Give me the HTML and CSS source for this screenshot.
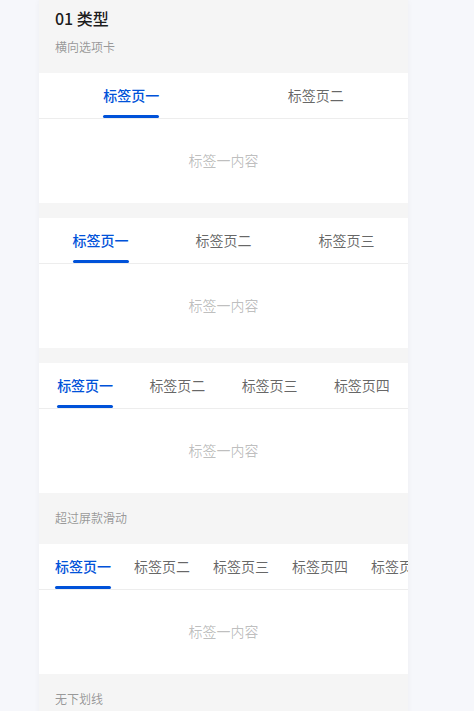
FILE: index.html
```html
<!DOCTYPE html>
<html lang="zh-CN">
<head>
    <meta charset="UTF-8">
    <meta name="viewport" content="width=device-width, initial-scale=1.0">
    <title>Tabs 选项卡</title>
    <link rel="stylesheet" href="styles.css">
</head>
<body>

    <div class="demo">
        <h2 class="demo-title">01 类型</h2>
        <p class="demo-desc first">横向选项卡</p>

        <!-- 两个标签 -->
        <div class="tabs">
            <div class="tabs-nav">
                <div class="tab active"><span>标签页一</span></div>
                <div class="tab"><span>标签页二</span></div>
            </div>
            <div class="tabs-panel">标签一内容</div>
        </div>

        <!-- 三个标签 -->
        <div class="tabs">
            <div class="tabs-nav">
                <div class="tab active"><span>标签页一</span></div>
                <div class="tab"><span>标签页二</span></div>
                <div class="tab"><span>标签页三</span></div>
            </div>
            <div class="tabs-panel">标签一内容</div>
        </div>

        <!-- 四个标签 -->
        <div class="tabs">
            <div class="tabs-nav">
                <div class="tab active"><span>标签页一</span></div>
                <div class="tab"><span>标签页二</span></div>
                <div class="tab"><span>标签页三</span></div>
                <div class="tab"><span>标签页四</span></div>
            </div>
            <div class="tabs-panel">标签一内容</div>
        </div>

        <p class="demo-desc">超过屏款滑动</p>

        <div class="tabs">
            <div class="tabs-nav scroll">
                <div class="tab active"><span>标签页一</span></div>
                <div class="tab"><span>标签页二</span></div>
                <div class="tab"><span>标签页三</span></div>
                <div class="tab"><span>标签页四</span></div>
                <div class="tab"><span>标签页五</span></div>
                <div class="tab"><span>标签页六</span></div>
            </div>
            <div class="tabs-panel">标签一内容</div>
        </div>

        <p class="demo-desc">无下划线</p>
    </div>

</body>
</html>
```

FILE: styles.css
```css
body {
    margin: 0;
    background: #f6f7fb;
    font-family: "Noto Sans CJK SC", "Noto Sans", sans-serif;
}

.demo {
    width: 369px;
    min-height: 100vh;
    margin-left: 39px;
    background: #f5f5f5;
    box-shadow: 0 0 6px rgba(0, 0, 0, 0.04);
    padding-top: 6px;
    box-sizing: border-box;
    overflow: hidden;
}

.demo-title {
    margin: 0;
    padding: 0 16px;
    font-size: 16px;
    line-height: 24px;
    font-weight: 500;
    color: rgba(0, 0, 0, 0.9);
}

.demo-desc {
    margin: 15px 0 16px;
    padding: 0 16px;
    font-size: 12px;
    line-height: 20px;
    color: rgba(0, 0, 0, 0.4);
}

.demo-desc.first {
    margin-top: 7px;
}

.tabs {
    background: #fff;
    margin-bottom: 15px;
}

.tabs + .demo-desc {
    margin-top: 0;
}

.tabs-nav {
    display: flex;
    height: 45px;
    border-bottom: 1px solid #ededed;
}

.tab {
    flex: 1;
    display: flex;
    align-items: center;
    justify-content: center;
    font-size: 14px;
    color: rgba(0, 0, 0, 0.6);
    white-space: nowrap;
}

.tab span {
    position: relative;
    height: 45px;
    line-height: 45px;
}

.tab.active {
    color: #0052d9;
    font-weight: 500;
}

.tab.active span::after {
    content: "";
    position: absolute;
    left: 0;
    right: 0;
    bottom: 0;
    height: 3px;
    background: #0052d9;
    border-radius: 2px;
}

.tabs-nav.scroll {
    padding-left: 16px;
    gap: 23px;
    overflow-x: auto;
    scrollbar-width: none;
}

.tabs-nav.scroll .tab {
    flex: none;
}

.tabs-panel {
    height: 84px;
    line-height: 82px;
    text-align: center;
    font-size: 14px;
    color: rgba(0, 0, 0, 0.26);
}
```
